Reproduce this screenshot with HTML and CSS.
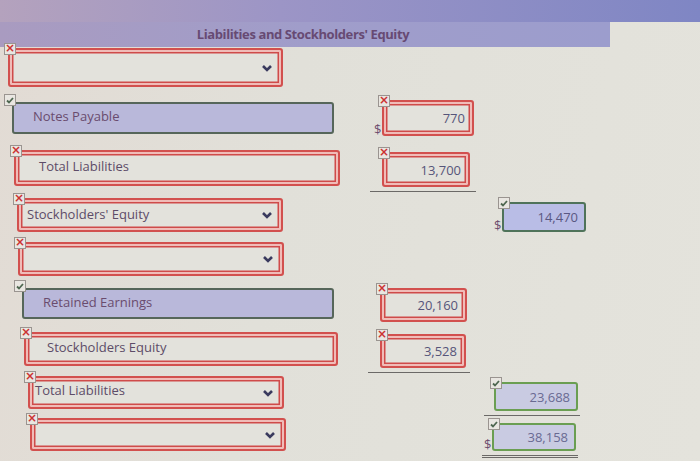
FILE: index.html
```html
<!DOCTYPE html>
<html>
<head>
<meta charset="utf-8">
<link rel="stylesheet" href="styles.css">
</head>
<body>
<div class="screen">
  <div class="topband"></div>
  <div class="header">Liabilities and Stockholders' Equity</div>

  <div class="row r1">
    <div class="cell-a"><div class="box red sel l1"><span class="badge x">&#215;</span><svg class="chev" viewBox="0 0 10 7"><polyline points="1,1 5,5 9,1"/></svg></div></div>
  </div>

  <div class="row r2">
    <div class="cell-a"><div class="box green lbl l2"><span class="badge ok far"><svg viewBox="0 0 10 10"><polyline points="2,5.5 4,7.5 8,3"/></svg></span>Notes Payable</div></div>
    <div class="cell-b"><div class="box red amt a2"><span class="badge x">&#215;</span><span class="dollar">$</span>770</div></div>
  </div>

  <div class="row r3">
    <div class="cell-a"><div class="box red lbl l3"><span class="badge x">&#215;</span>Total Liabilities</div></div>
    <div class="cell-b"><div class="rule u3"><div class="box red amt a3"><span class="badge x">&#215;</span>13,700</div></div></div>
  </div>

  <div class="row r4">
    <div class="cell-a"><div class="box red sel l4"><span class="badge x">&#215;</span>Stockholders' Equity<svg class="chev" viewBox="0 0 10 7"><polyline points="1,1 5,5 9,1"/></svg></div></div>
    <div class="cell-b"></div>
    <div class="cell-c"><div class="box green amt blue a4"><span class="badge ok"><svg viewBox="0 0 10 10"><polyline points="2,5.5 4,7.5 8,3"/></svg></span><span class="dollar">$</span>14,470</div></div>
  </div>

  <div class="row r5">
    <div class="cell-a"><div class="box red sel l5"><span class="badge x">&#215;</span><svg class="chev" viewBox="0 0 10 7"><polyline points="1,1 5,5 9,1"/></svg></div></div>
  </div>

  <div class="row r6">
    <div class="cell-a"><div class="box green lbl l6"><span class="badge ok far"><svg viewBox="0 0 10 10"><polyline points="2,5.5 4,7.5 8,3"/></svg></span>Retained Earnings</div></div>
    <div class="cell-b"><div class="box red amt a6"><span class="badge x">&#215;</span>20,160</div></div>
  </div>

  <div class="row r7">
    <div class="cell-a"><div class="box red lbl l7"><span class="badge x">&#215;</span>Stockholders Equity</div></div>
    <div class="cell-b"><div class="rule u7"><div class="box red amt a7"><span class="badge x">&#215;</span>3,528</div></div></div>
  </div>

  <div class="row r8">
    <div class="cell-a"><div class="box red sel l8"><span class="badge x">&#215;</span>Total Liabilities<svg class="chev" viewBox="0 0 10 7"><polyline points="1,1 5,5 9,1"/></svg></div></div>
    <div class="cell-b"></div>
    <div class="cell-c"><div class="rule u8"><div class="box green amt pale a8"><span class="badge ok"><svg viewBox="0 0 10 10"><polyline points="2,5.5 4,7.5 8,3"/></svg></span>23,688</div></div></div>
  </div>

  <div class="row r9">
    <div class="cell-a"><div class="box red sel l9"><span class="badge x">&#215;</span><svg class="chev" viewBox="0 0 10 7"><polyline points="1,1 5,5 9,1"/></svg></div></div>
    <div class="cell-b"></div>
    <div class="cell-c"><div class="rule double u9"><div class="box green amt pale a9"><span class="badge ok"><svg viewBox="0 0 10 10"><polyline points="2,5.5 4,7.5 8,3"/></svg></span><span class="dollar">$</span>38,158</div></div></div>
  </div>
</div>
</body>
</html>
```
FILE: styles.css
```css
html, body {
  margin: 0;
  padding: 0;
}
body {
  width: 700px;
  height: 461px;
  overflow: hidden;
  font-family: "Open Sans", "Noto Sans", sans-serif;
  background: #dedcd5;
}
.screen {
  width: 700px;
  height: 461px;
  background: linear-gradient(100deg, #e2dbd4 0%, #e1e0d9 40%, #e4e3dc 100%);
}
.topband {
  height: 22px;
  background: linear-gradient(90deg, #b4a2bd 0%, #9c95c6 40%, #7f86c4 100%);
}
.header {
  width: 610px;
  height: 25px;
  box-sizing: border-box;
  background: linear-gradient(90deg, #a99bc0 0%, #a09dca 50%, #9c9dcd 100%);
  color: #674a73;
  font-weight: 700;
  font-size: 13px;
  letter-spacing: -0.4px;
  text-align: center;
  line-height: 24px;
  padding-right: 4px;
}
.row {
  display: grid;
  grid-template-columns: 360px 120px 220px;
  align-items: start;
}
.r1 { height: 45px; }
.r2 { height: 48px; }
.r3 { height: 50px; }
.r4 { height: 46px; }
.r5 { height: 44px; }
.r6 { height: 46px; }
.r7 { height: 44px; }
.r8 { height: 44px; }
.r9 { height: 47px; }

.box {
  position: relative;
  box-sizing: border-box;
  display: flex;
  align-items: center;
  font-size: 13px;
}
.red {
  border: 2px solid #d2504e;
  border-radius: 3px;
  box-shadow: inset 0 0 0 2px #f0bcb8, inset 0 0 0 3.5px #cf4b4a;
  background: #e3e2dc;
  color: #5d4c68;
}
.green {
  border: 2px solid #56665a;
  border-radius: 3px;
  background: #b9b8da;
  color: #6a4c6e;
}
.lbl { padding-bottom: 4px; }
.amt {
  justify-content: flex-end;
  padding-right: 6px;
  color: #56557a;
  font-size: 13px;
}
.amt.red { padding-right: 7px; }
.blue {
  background: #b9bde6;
  border-color: #4f735a;
  color: #5a5882;
}
.pale {
  background: #c9cbe2;
  border-color: #6a9e52;
  color: #6a6a92;
}
.sel { padding-left: 9px; }

.badge {
  position: absolute;
  left: -6px;
  top: -7px;
  width: 12px;
  height: 12px;
  box-sizing: border-box;
  border: 1px solid #9a9490;
  background: #e9e6e1;
  color: #cc3333;
  font-size: 12px;
  font-weight: 700;
  line-height: 9px;
  text-align: center;
  font-family: "DejaVu Sans", sans-serif;
}
.badge.far {
  left: -10px;
  top: -10px;
}
.badge svg {
  position: absolute;
  left: 0;
  top: 0;
  width: 10px;
  height: 10px;
  fill: none;
  stroke: #4e6650;
  stroke-width: 1.8;
}
.chev {
  position: absolute;
  right: 9px;
  top: 50%;
  margin-top: -3px;
  width: 10px;
  height: 7px;
  fill: none;
  stroke: #3a3a5e;
  stroke-width: 2.6;
}
.dollar {
  position: absolute;
  left: -10px;
  bottom: -4px;
  color: #6c4d70;
  font-size: 13px;
}

.rule {
  box-sizing: border-box;
  border-bottom: 1px solid #6b6967;
}
.rule.double {
  border-bottom: 3px double #6b6967;
}

/* label boxes */
.l1 { margin: 1px 0 0 8px; width: 275px; height: 39px; }
.l2 { margin: 10px 0 0 12px; width: 322px; height: 32px; padding-left: 19px; }
.l3 { margin: 10px 0 0 14px; width: 326px; height: 36px; padding-left: 23px; }
.l4 { margin: 8px 0 0 17px; width: 266px; height: 34px; padding-left: 8px; padding-bottom: 3px; }
.l5 { margin: 6px 0 0 18px; width: 266px; height: 34px; }
.l6 { margin: 8px 0 0 22px; width: 312px; height: 31px; padding-left: 19px; }
.l7 { margin: 6px 0 0 24px; width: 314px; height: 34px; padding-left: 21px; }
.l8 { margin: 6px 0 0 28px; width: 256px; height: 33px; padding-left: 5px; align-items: flex-start; padding-top: 3px; }
.l9 { margin: 4px 0 0 30px; width: 256px; height: 33px; }

/* amount boxes */
.a2 { margin: 8px 0 0 22px; width: 92px; height: 36px; }
.u3 { margin: 12px 0 0 10px; width: 106px; padding: 0 0 4px 12px; }
.a3 { width: 88px; height: 35px; }
.a4 { margin: 12px 0 0 22px; width: 84px; height: 30px; }
.a6 { margin: 8px 0 0 20px; width: 87px; height: 34px; }
.u7 { margin: 8px 0 0 8px; width: 102px; padding: 0 0 4px 12px; }
.a7 { width: 86px; height: 34px; }
.u8 { margin: 12px 0 0 4px; width: 96px; padding: 0 0 4px 10px; }
.a8 { width: 84px; height: 29px; }
.u9 { margin: 9px 0 0 2px; width: 96px; padding: 0 0 4px 10px; }
.a9 { width: 84px; height: 28px; }
```
